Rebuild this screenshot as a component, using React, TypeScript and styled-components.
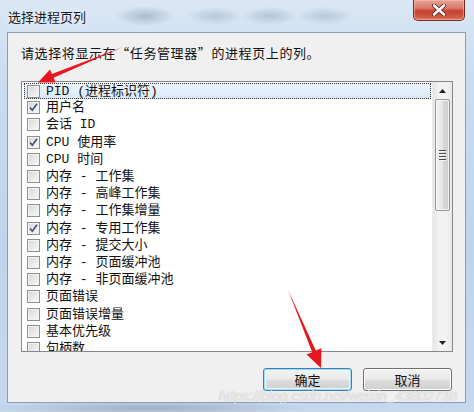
import React, { useState } from "react";
import styled, { createGlobalStyle } from "styled-components";

const cjk = `"Noto Sans CJK SC", "Noto Sans", sans-serif`;
const listFont = `"Liberation Mono", "Noto Sans CJK SC", monospace`;

const GlobalStyle = createGlobalStyle`
  html, body {
    margin: 0;
    padding: 0;
    width: 474px;
    height: 412px;
    overflow: hidden;
  }
  body {
    font-family: ${cjk};
  }
`;

const columns = [
  { label: "PID (进程标识符)", checked: false },
  { label: "用户名", checked: true },
  { label: "会话 ID", checked: false },
  { label: "CPU 使用率", checked: true },
  { label: "CPU 时间", checked: false },
  { label: "内存 - 工作集", checked: false },
  { label: "内存 - 高峰工作集", checked: false },
  { label: "内存 - 工作集增量", checked: false },
  { label: "内存 - 专用工作集", checked: true },
  { label: "内存 - 提交大小", checked: false },
  { label: "内存 - 页面缓冲池", checked: false },
  { label: "内存 - 非页面缓冲池", checked: false },
  { label: "页面错误", checked: false },
  { label: "页面错误增量", checked: false },
  { label: "基本优先级", checked: false },
  { label: "句柄数", checked: false },
];

export default function App() {
  const [checks, setChecks] = useState(columns.map((c) => c.checked));

  const toggle = (i: number) =>
    setChecks((prev) => prev.map((v, j) => (j === i ? !v : v)));

  return (
    <Frame>
      <GlobalStyle />
      <TitleBar>
        <Title>选择进程页列</Title>
        <CloseButton>
          <svg width="16" height="12" viewBox="0 0 16 12">
            <path
              d="M3 1.5 L13 10.5 M13 1.5 L3 10.5"
              stroke="#5a1a1a"
              strokeWidth="4.2"
              strokeLinecap="round"
            />
            <path
              d="M3 1.5 L13 10.5 M13 1.5 L3 10.5"
              stroke="#ffffff"
              strokeWidth="2.6"
              strokeLinecap="round"
            />
          </svg>
        </CloseButton>
      </TitleBar>

      <Client>
        <Prompt>请选择将显示在“任务管理器”的进程页上的列。</Prompt>

        <ListBox>
          <Rows>
            {columns.map((c, i) => (
              <Row key={c.label} $focused={i === 0} onClick={() => toggle(i)}>
                <CheckBox>
                  {checks[i] && (
                    <svg width="11" height="11" viewBox="0 0 11 11">
                      <path
                        d="M2 5.5 L4.3 8.3 L9 1.8"
                        fill="none"
                        stroke="#3d4f7a"
                        strokeWidth="1.6"
                      />
                    </svg>
                  )}
                </CheckBox>
                <RowLabel>{c.label}</RowLabel>
              </Row>
            ))}
          </Rows>
          <ScrollBar>
            <ArrowCell>
              <svg width="7" height="4" viewBox="0 0 7 4">
                <path d="M0 4 L3.5 0 L7 4 Z" fill="#222" />
              </svg>
            </ArrowCell>
            <Thumb>
              <Grip />
              <Grip />
              <Grip />
              <Grip />
            </Thumb>
            <Track />
            <ArrowCell>
              <svg width="7" height="4" viewBox="0 0 7 4">
                <path d="M0 0 L7 0 L3.5 4 Z" fill="#222" />
              </svg>
            </ArrowCell>
          </ScrollBar>
        </ListBox>

        <ButtonRow>
          <DialogButton $default>确定</DialogButton>
          <DialogButton>取消</DialogButton>
        </ButtonRow>
      </Client>

      <Watermark>https://blog.csdn.net/weixin_43802738</Watermark>

      <Annotations width="474" height="412" viewBox="0 0 474 412">
        <polygon
          points="123,47 53.6,77.7 55.5,82.4 38,82.5 50.1,69.4 52,74"
          fill="#e8161e"
        />
        <polygon
          points="288,290 315.8,350.6 321.4,348.3 321,368 306.6,354.5 312.2,352.2"
          fill="#e8161e"
        />
      </Annotations>
    </Frame>
  );
}

const Frame = styled.div`
  position: relative;
  width: 474px;
  height: 412px;
  display: flex;
  flex-direction: column;
  box-sizing: border-box;
  padding: 0 8px 9px 7px;
  overflow: hidden;
  background:
    radial-gradient(ellipse 30px 10px at 145px 16px, rgba(90, 110, 140, 0.35), transparent),
    radial-gradient(ellipse 28px 9px at 215px 16px, rgba(90, 110, 140, 0.25), transparent),
    radial-gradient(ellipse 28px 9px at 270px 16px, rgba(90, 110, 140, 0.28), transparent),
    radial-gradient(ellipse 28px 9px at 325px 16px, rgba(90, 110, 140, 0.25), transparent),
    radial-gradient(ellipse 160px 8px at 150px 408px, rgba(90, 100, 120, 0.35), transparent),
    linear-gradient(180deg, #dae7f5 0%, #c9dcf0 20%, #bfd4ec 60%, #c6d8ed 100%);
`;

const TitleBar = styled.div`
  height: 32px;
  flex: none;
  display: flex;
  align-items: flex-start;
  justify-content: space-between;
`;

const Title = styled.div`
  margin: 8px 0 0 1px;
  font-family: ${cjk};
  font-size: 13px;
  line-height: 17px;
  color: #1a1a1a;
  text-shadow: 0 0 6px rgba(255, 255, 255, 0.9);
`;

const CloseButton = styled.div`
  width: 52px;
  height: 21px;
  box-sizing: border-box;
  margin-right: 1px;
  display: flex;
  align-items: center;
  justify-content: center;
  border: 1px solid #7a2a22;
  border-top: none;
  border-radius: 0 0 5px 5px;
  background: linear-gradient(
    180deg,
    #e6a293 0%,
    #d87c6c 40%,
    #c5412f 55%,
    #cf5a43 85%,
    #e0806a 100%
  );
  box-shadow: inset 0 0 0 1px rgba(255, 200, 190, 0.5);
`;

const Client = styled.div`
  flex: 1;
  display: flex;
  flex-direction: column;
  background: #f0f0f0;
  border: 1px solid #8c9db3;
  padding: 11px 12px 0 13px;
  min-height: 0;
`;

const Prompt = styled.div`
  font-family: ${cjk};
  font-size: 13px;
  line-height: 17px;
  color: #111;
  letter-spacing: 0.6px;
`;

const ListBox = styled.div`
  margin-top: 20px;
  height: 271px;
  box-sizing: border-box;
  border: 1px solid #828790;
  background: #fff;
  display: flex;
  overflow: hidden;
`;

const Rows = styled.div`
  flex: 1;
  display: flex;
  flex-direction: column;
  overflow: hidden;
`;

const Row = styled.div<{ $focused?: boolean }>`
  flex: none;
  height: 17.2px;
  display: flex;
  align-items: center;
  box-sizing: border-box;
  padding-left: 4px;
  margin: 0 1px;
  cursor: default;
  ${(p) =>
    p.$focused &&
    `
    margin: 1px 1px 0 2px;
    height: 16.2px;
    padding-left: 3px;
    background: linear-gradient(180deg, #eef5fd, #d8e8fa);
    outline: 1px dotted #333;
    outline-offset: -1px;
  `}
`;

const CheckBox = styled.div`
  width: 13px;
  height: 13px;
  flex: none;
  box-sizing: border-box;
  border: 1px solid #8e8f8f;
  background: linear-gradient(135deg, #d6d6d6 0%, #e8e8e8 50%, #f8f8f8 100%);
  box-shadow: inset 0 0 0 1px #f4f4f4;
  display: flex;
  align-items: center;
  justify-content: center;
`;

const RowLabel = styled.span`
  margin-left: 6px;
  font-family: ${listFont};
  font-size: 13px;
  line-height: 17px;
  color: #111;
  white-space: pre;
`;

const ScrollBar = styled.div`
  width: 19px;
  flex: none;
  display: flex;
  flex-direction: column;
  align-items: center;
  background: linear-gradient(90deg, #e6e6e6, #f2f2f2 30%, #f2f2f2 70%, #e8e8e8);
  border-left: 1px solid #ececec;
`;

const ArrowCell = styled.div`
  height: 17px;
  width: 100%;
  flex: none;
  display: flex;
  align-items: center;
  justify-content: center;
`;

const Thumb = styled.div`
  width: 15px;
  height: 112px;
  flex: none;
  box-sizing: border-box;
  border: 1px solid #979797;
  border-radius: 2px;
  background: linear-gradient(90deg, #f1f1f1 0%, #e6e6e6 50%, #d6d6d6 55%, #cfcfcf 100%);
  box-shadow: inset 0 0 0 1px rgba(255, 255, 255, 0.7);
  display: flex;
  flex-direction: column;
  align-items: center;
  justify-content: center;
  gap: 1px;
`;

const Grip = styled.div`
  width: 7px;
  height: 1px;
  background: #4a4a4a;
  border-bottom: 1px solid #f6f6f6;
`;

const Track = styled.div`
  flex: 1;
`;

const ButtonRow = styled.div`
  margin-top: 16px;
  display: flex;
  justify-content: flex-end;
  gap: 11px;
  padding-right: 1px;
`;

const DialogButton = styled.button<{ $default?: boolean }>`
  width: 89px;
  height: 23px;
  box-sizing: border-box;
  padding: 0;
  font-family: ${cjk};
  font-size: 13px;
  color: #111;
  border-radius: 3px;
  border: 1px solid ${(p) => (p.$default ? "#3c7fb1" : "#707070")};
  background: linear-gradient(180deg, #f2f2f2 0%, #ebebeb 48%, #dddddd 52%, #cfcfcf 100%);
  box-shadow: ${(p) =>
    p.$default
      ? "inset 0 0 0 1px #9fdaf6, inset 0 0 0 2px #e4f5fc"
      : "inset 0 0 0 1px #fcfcfc"};
`;

const Watermark = styled.div`
  position: absolute;
  left: 219px;
  top: 389px;
  font-family: "Liberation Sans", sans-serif;
  font-size: 14px;
  line-height: 14px;
  font-style: italic;
  white-space: nowrap;
  color: rgba(255, 255, 255, 0.75);
  text-shadow: 0 0 1px rgba(120, 120, 120, 0.6);
  pointer-events: none;
`;

const Annotations = styled.svg`
  position: absolute;
  left: 0;
  top: 0;
  pointer-events: none;
`;
